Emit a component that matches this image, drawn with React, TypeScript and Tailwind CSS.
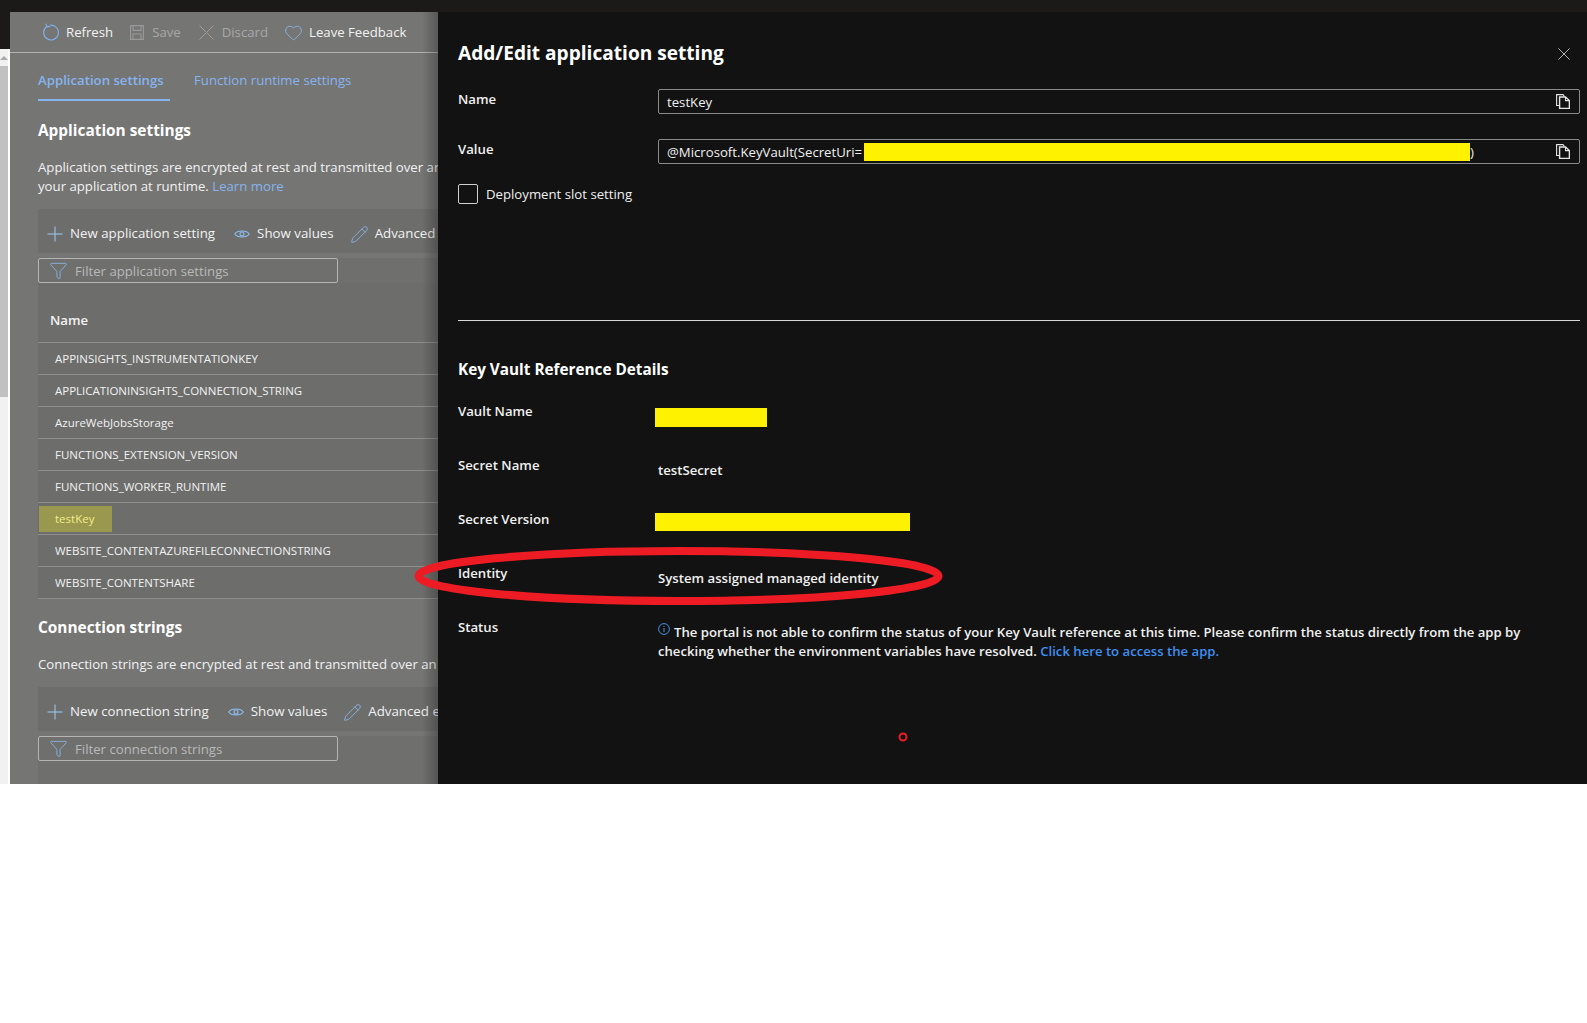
import { Filter, Heart, Pencil } from 'lucide-react';

const font = { fontFamily: '"Open Sans", "Noto Sans", sans-serif' };

const appSettings = [
  'APPINSIGHTS_INSTRUMENTATIONKEY',
  'APPLICATIONINSIGHTS_CONNECTION_STRING',
  'AzureWebJobsStorage',
  'FUNCTIONS_EXTENSION_VERSION',
  'FUNCTIONS_WORKER_RUNTIME',
  'testKey',
  'WEBSITE_CONTENTAZUREFILECONNECTIONSTRING',
  'WEBSITE_CONTENTSHARE',
];

const RefreshIcon = () => (
  <svg width="18" height="18" viewBox="0 0 18 18" fill="none" stroke="#7fb0ee" strokeWidth="1.1" className="shrink-0">
    <path d="M4.6 3.6 A7.4 7.4 0 1 0 8 2.2" />
    <path d="M3.8 0.6 L5 3.8 L8.2 3.4" />
  </svg>
);

const SaveIcon = () => (
  <svg width="14" height="15" viewBox="0 0 14 15" fill="none" stroke="#9a9a9a" strokeWidth="1.1">
    <path d="M0.6 0.6 H13.4 V14.4 H0.6 Z" />
    <path d="M3 0.6 V5.4 H11 V0.6 M3 14.4 V9 H11 V14.4" />
  </svg>
);

const CrossIcon = ({ size, color }: { size: number; color: string }) => (
  <svg width={size} height={size} viewBox="0 0 16 16" fill="none" stroke={color} strokeWidth="1" className="shrink-0">
    <path d="M0.5 0.5 L15.5 15.5 M15.5 0.5 L0.5 15.5" />
  </svg>
);

const PlusIcon = () => (
  <svg width="16" height="16" viewBox="0 0 16 16" fill="none" stroke="#9fcbf5" strokeWidth="1" className="mr-[7px] shrink-0">
    <path d="M8 0.5 V15.5 M0.5 8 H15.5" />
  </svg>
);

const EyeIcon = () => (
  <svg width="16" height="10" viewBox="0 0 16 10" fill="none" stroke="#8dbdee" strokeWidth="1.1">
    <path d="M0.7 5 C3.5 1 12.5 1 15.3 5 C12.5 9 3.5 9 0.7 5 Z" />
    <circle cx="8" cy="5" r="2" />
  </svg>
);

const CopyIcon = () => (
  <svg width="14" height="15" viewBox="0 0 14 15" fill="none" stroke="#e4e4e4" strokeWidth="1.1" className="shrink-0">
    <path d="M3.5 11.5 H0.6 V0.6 H7 L8.5 2.5" />
    <path d="M3.6 3 H9.5 L13.4 6.6 V14.4 H3.6 Z" strokeWidth="1.4" />
    <path d="M9.5 3 V6.6 H13.4" />
  </svg>
);

const CommandBar = ({ label, advanced }: { label: string; advanced: string }) => (
  <div className="flex h-[44px] items-center bg-[#6d6d6c] pt-[6px] pl-[9px] text-[13.3px] whitespace-nowrap text-[#f2f2f2]">
    <PlusIcon />
    <span>{label}</span>
    <span className="ml-[19px] shrink-0">
      <EyeIcon />
    </span>
    <span className="ml-[7px]">Show values</span>
    <Pencil size={19} strokeWidth={1} color="#8dbdee" className="mr-[6px] ml-[16px] shrink-0" />
    <span>{advanced}</span>
  </div>
);

const FilterBox = ({ text }: { text: string }) => (
  <div className="mt-[5px] flex h-[25px] w-[300px] items-center rounded-[2px] border border-[#b5b5b5] pt-[2px] pl-[10px] text-[13.2px] text-[#b9b9b9]">
    <Filter size={19} strokeWidth={1} color="#8dbdee" className="mr-[7px] -mt-[2px] shrink-0" />
    {text}
  </div>
);

const Field = ({ label, children, className }: { label: string; children: React.ReactNode; className: string }) => (
  <div className={`flex ${className}`}>
    <div className="w-[200px] shrink-0 pt-[1px] text-[13.2px] font-semibold text-[#f0f0f0]">{label}</div>
    {children}
  </div>
);

const TextInput = ({ children }: { children: React.ReactNode }) => (
  <div className="flex h-[25px] w-[922px] items-center justify-between rounded-[2px] border border-[#8a8a8a] pr-[9px] pl-[8px] text-[13.2px] whitespace-nowrap text-[#f0f0f0]">
    <div className="flex items-center pt-[2px]">{children}</div>
    <CopyIcon />
  </div>
);

export default function App() {
  return (
    <div className="relative flex h-[1023px] w-[1587px] flex-col overflow-hidden bg-white" style={font}>
      <div className="h-[12px] shrink-0 bg-[#1b1a18]" />
      <div className="flex h-[772px] shrink-0">
        <div className="flex w-[10px] shrink-0 flex-col bg-white">
          <div className="h-[37px] bg-[#1b1a18]" />
          <div className="flex w-[8px] flex-1 flex-col items-center bg-[#f1f1f1]">
            <div className="mt-[7px] h-0 w-0 border-x-[4px] border-b-[4px] border-x-transparent border-b-[#a8a8a8]" />
            <div className="mt-[6px] h-[331px] w-full bg-[#c1c1c1]" />
          </div>
        </div>

        <div className="relative w-[428px] shrink-0 overflow-hidden bg-[#757574] text-[#f2f2f2]">
          <div className="flex h-[41px] items-center border-b border-[#b4b4b4] pl-[32px] text-[13.2px] whitespace-nowrap">
            <RefreshIcon />
            <span className="mt-[2px] ml-[6px]">Refresh</span>
            <span className="ml-[17px]">
              <SaveIcon />
            </span>
            <span className="mt-[2px] ml-[8px] text-[#a8a8a8]">Save</span>
            <span className="ml-[18px]">
              <CrossIcon size={15} color="#a0a0a0" />
            </span>
            <span className="mt-[2px] ml-[8px] text-[#a8a8a8]">Discard</span>
            <Heart size={19} strokeWidth={1} color="#8dbdee" className="ml-[16px] shrink-0" />
            <span className="mt-[2px] ml-[6px]">Leave Feedback</span>
          </div>

          <div className="pl-[28px]">
            <div className="flex h-[48px] text-[13.2px] whitespace-nowrap text-[#86b4ee]">
              <div className="flex w-[132px] border-b-2 border-[#86b4ee] pt-[18px] font-semibold">Application settings</div>
              <div className="ml-[24px] pt-[18px]">Function runtime settings</div>
            </div>
            <h2 className="mt-[19px] text-[15.4px] leading-[22px] font-bold text-white">Application settings</h2>
            <div className="mt-[16px] text-[13.2px] leading-[19px] whitespace-nowrap">
              <div>Application settings are encrypted at rest and transmitted over an encrypted channel.</div>
              <div>
                your application at runtime. <span className="text-[#86b4ee]">Learn more</span>
              </div>
            </div>
            <div className="mt-[13px]">
              <CommandBar label="New application setting" advanced="Advanced edit" />
            </div>
            <div className="bg-[#6f6f6e]">
              <FilterBox text="Filter application settings" />
              <div className="flex h-[60px] items-center border-b border-[#8e8e8e] bg-[#6d6d6c] pt-[16px] pl-[12px] text-[13.2px] font-semibold text-[#f2f2f2]">
                Name
              </div>
              {appSettings.map((name) => (
                <div key={name} className="flex h-[32px] items-center border-b border-[#8e8e8e] bg-[#6d6d6c] text-[11.5px] whitespace-nowrap">
                  {name === 'testKey' ? (
                    <span className="mt-[1px] ml-[1px] flex h-[26px] w-[73px] items-center bg-[#9a974e] pl-[16px] text-[#eeee88]">testKey</span>
                  ) : (
                    <span className="pl-[17px]">{name}</span>
                  )}
                </div>
              ))}
            </div>
            <h2 className="mt-[18px] text-[15.4px] leading-[22px] font-bold text-white">Connection strings</h2>
            <div className="mt-[16px] text-[13.2px] leading-[19px] whitespace-nowrap">
              Connection strings are encrypted at rest and transmitted over an encrypted channel.
            </div>
            <div className="mt-[13px]">
              <CommandBar label="New connection string" advanced="Advanced edit" />
            </div>
            <div className="h-[53px] bg-[#6f6f6e]">
              <FilterBox text="Filter connection strings" />
            </div>
          </div>
          <div className="pointer-events-none absolute inset-y-0 right-0 w-[16px] bg-gradient-to-l from-black/25 to-transparent" />
        </div>

        <div className="min-w-0 flex-1 bg-[#121212] pl-[20px] text-[#f0f0f0]">
          <div className="flex h-[77px] items-start justify-between">
            <h1 className="mt-[27px] text-[19.1px] leading-[28px] font-bold text-white">Add/Edit application setting</h1>
            <span className="mt-[36px] mr-[17px]">
              <CrossIcon size={12} color="#e8e8e8" />
            </span>
          </div>
          <Field label="Name" className="h-[50px]">
            <TextInput>testKey</TextInput>
          </Field>
          <Field label="Value" className="h-[45px]">
            <TextInput>
              <span>@Microsoft.KeyVault(SecretUri=</span>
              <span className="ml-[2px] inline-block h-[18px] w-[606px] bg-[#fff200]" />
              <span>)</span>
            </TextInput>
          </Field>
          <div className="flex items-center text-[13.2px]">
            <span className="mr-[8px] h-[20px] w-[20px] rounded-[2px] border border-[#d0d0d0]" />
            <span className="pt-[1px]">Deployment slot setting</span>
          </div>
          <div className="mt-[115px] h-px w-[1122px] bg-[#d8d8d8]" />
          <h3 className="mt-[37px] text-[15.3px] leading-[22px] font-bold text-white">Key Vault Reference Details</h3>

          <Field label="Vault Name" className="mt-[21px] h-[54px]">
            <span className="mt-[7px] -ml-[3px] h-[19px] w-[112px] bg-[#fff200]" />
          </Field>
          <Field label="Secret Name" className="h-[54px]">
            <span className="mt-[6px] text-[13.2px] font-semibold">testSecret</span>
          </Field>
          <Field label="Secret Version" className="h-[54px]">
            <span className="mt-[4px] -ml-[3px] h-[18px] w-[255px] bg-[#fff200]" />
          </Field>
          <Field label="Identity" className="h-[54px]">
            <span className="mt-[6px] text-[13.2px] font-semibold">System assigned managed identity</span>
          </Field>
          <Field label="Status" className="">
            <div className="mt-[6px] w-[890px] text-[13.15px] leading-[19px] font-semibold">
              <svg width="12" height="12" viewBox="0 0 12 12" fill="none" stroke="#4a90e2" strokeWidth="1" className="mr-[4px] inline-block align-[2px]">
                <circle cx="6" cy="6" r="5.4" />
                <path d="M6 5 V9 M6 3 V4" />
              </svg>
              The portal is not able to confirm the status of your Key Vault reference at this time. Please confirm the status directly from the app by checking whether the environment variables have resolved.{' '}
              <span className="text-[#3f8fef]">Click here to access the app.</span>
            </div>
          </Field>
        </div>
      </div>

      {/* red markup drawn on top of the screenshot */}
      <svg className="pointer-events-none absolute top-[540px] left-[410px]" width="540" height="75" viewBox="0 0 540 75" fill="none">
        <ellipse cx="268.5" cy="36" rx="260" ry="25" stroke="#ed1c24" strokeWidth="8" />
      </svg>
      <svg className="pointer-events-none absolute top-[732px] left-[898px]" width="10" height="10" viewBox="0 0 10 10" fill="none">
        <circle cx="5" cy="5" r="3.5" stroke="#ed1c24" strokeWidth="2" />
      </svg>
    </div>
  );
}
